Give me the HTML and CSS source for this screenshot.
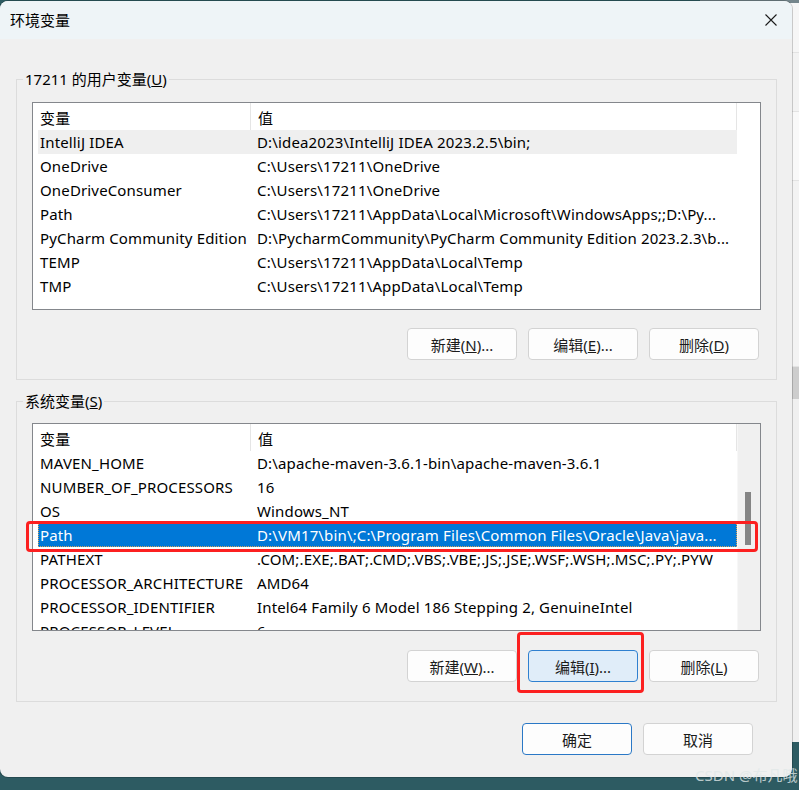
FILE: index.html
```html
<!DOCTYPE html>
<html lang="zh-CN">
<head>
    <meta charset="UTF-8">
    <meta name="viewport" content="width=device-width, initial-scale=1.0">
    <title>环境变量</title>
    <link rel="stylesheet" href="styles.css">
</head>
<body>
    <!-- window behind the dialog, only its left edge shows -->
    <div class="backwin">
        <div class="bw-top"></div>
        <div class="bw-band bw-a"><span>m</span></div>
        <div class="bw-band bw-b"></div>
        <div class="bw-band bw-c"><span class="bw-link">:/</span></div>
        <div class="bw-band bw-d"></div>
        <div class="bw-band bw-e"></div>
    </div>

    <div class="dialog">
        <div class="titlebar">
            <span class="title">环境变量</span>
            <svg class="close" width="12" height="12" viewBox="0 0 12 12">
                <path d="M0.5 0.5L11.5 11.5M11.5 0.5L0.5 11.5" stroke="#1b1b1b" stroke-width="1.1" fill="none"/>
            </svg>
        </div>

        <div class="content">
            <fieldset class="group group-user">
                <legend>17211 的用户变量(<u>U</u>)</legend>
                <div class="listview">
                    <div class="lv-main">
                        <div class="lv-head">
                            <div class="col name">变量</div>
                            <div class="col value">值</div>
                        </div>
                        <div class="lv-row hover">
                            <div class="col name">IntelliJ IDEA</div>
                            <div class="col value">D:\idea2023\IntelliJ IDEA 2023.2.5\bin;</div>
                        </div>
                        <div class="lv-row">
                            <div class="col name">OneDrive</div>
                            <div class="col value">C:\Users\17211\OneDrive</div>
                        </div>
                        <div class="lv-row">
                            <div class="col name">OneDriveConsumer</div>
                            <div class="col value">C:\Users\17211\OneDrive</div>
                        </div>
                        <div class="lv-row">
                            <div class="col name">Path</div>
                            <div class="col value">C:\Users\17211\AppData\Local\Microsoft\WindowsApps;;D:\Py...</div>
                        </div>
                        <div class="lv-row">
                            <div class="col name">PyCharm Community Edition</div>
                            <div class="col value">D:\PycharmCommunity\PyCharm Community Edition 2023.2.3\b...</div>
                        </div>
                        <div class="lv-row">
                            <div class="col name">TEMP</div>
                            <div class="col value">C:\Users\17211\AppData\Local\Temp</div>
                        </div>
                        <div class="lv-row">
                            <div class="col name">TMP</div>
                            <div class="col value">C:\Users\17211\AppData\Local\Temp</div>
                        </div>
                    </div>
                    <div class="lv-side"></div>
                </div>
                <div class="btnrow">
                    <button class="btn">新建(<u>N</u>)...</button>
                    <button class="btn">编辑(<u>E</u>)...</button>
                    <button class="btn">删除(<u>D</u>)</button>
                </div>
            </fieldset>

            <fieldset class="group group-sys">
                <legend>系统变量(<u>S</u>)</legend>
                <div class="listview">
                    <div class="lv-main">
                        <div class="lv-head">
                            <div class="col name">变量</div>
                            <div class="col value">值</div>
                        </div>
                        <div class="lv-row">
                            <div class="col name">MAVEN_HOME</div>
                            <div class="col value">D:\apache-maven-3.6.1-bin\apache-maven-3.6.1</div>
                        </div>
                        <div class="lv-row">
                            <div class="col name">NUMBER_OF_PROCESSORS</div>
                            <div class="col value">16</div>
                        </div>
                        <div class="lv-row">
                            <div class="col name">OS</div>
                            <div class="col value">Windows_NT</div>
                        </div>
                        <div class="lv-row selected">
                            <div class="col name">Path</div>
                            <div class="col value">D:\VM17\bin\;C:\Program Files\Common Files\Oracle\Java\java...</div>
                        </div>
                        <div class="lv-row">
                            <div class="col name">PATHEXT</div>
                            <div class="col value">.COM;.EXE;.BAT;.CMD;.VBS;.VBE;.JS;.JSE;.WSF;.WSH;.MSC;.PY;.PYW</div>
                        </div>
                        <div class="lv-row">
                            <div class="col name">PROCESSOR_ARCHITECTURE</div>
                            <div class="col value">AMD64</div>
                        </div>
                        <div class="lv-row">
                            <div class="col name">PROCESSOR_IDENTIFIER</div>
                            <div class="col value">Intel64 Family 6 Model 186 Stepping 2, GenuineIntel</div>
                        </div>
                        <div class="lv-row">
                            <div class="col name">PROCESSOR_LEVEL</div>
                            <div class="col value">6</div>
                        </div>
                    </div>
                    <div class="lv-side scrollbar">
                        <div class="thumb"></div>
                    </div>
                    <div class="mark mark-row"></div>
                </div>
                <div class="btnrow">
                    <button class="btn">新建(<u>W</u>)...</button>
                    <button class="btn focused">编辑(<u>I</u>)...<span class="mark mark-btn"></span></button>
                    <button class="btn">删除(<u>L</u>)</button>
                </div>
            </fieldset>

            <div class="footer">
                <button class="btn default">确定</button>
                <button class="btn">取消</button>
            </div>
        </div>
    </div>

    <div class="watermark">CSDN @布凡哦</div>
</body>
</html>
```

FILE: styles.css
```css
body {
    margin: 0;
    width: 799px;
    height: 790px;
    position: relative;
    overflow: hidden;
    background-color: #2d5b62;
    font-family: "Noto Sans", "Noto Sans CJK SC", sans-serif;
    font-size: 15px;
    color: #000;
}

/* back window */
.backwin {
    position: absolute;
    left: 700px;
    top: 0;
    width: 99px;
    height: 742px;
    background-color: #f0f0f0;
    overflow: hidden;
}
.bw-top {
    height: 3px;
    background-color: #75868c;
}
.bw-band {
    border-bottom: 1px solid #e3e3e3;
    position: relative;
}
.bw-band span {
    position: absolute;
    left: 92px;
    line-height: 20px;
}
.bw-a {
    height: 49px;
    background-color: #f6f6f6;
}
.bw-a span {
    top: 70px;
}
.bw-b {
    height: 58px;
    background-color: #f3f3f3;
}
.bw-c {
    height: 68px;
    background-color: #f9f9f9;
}
.bw-c span {
    top: 75px;
}
.bw-link {
    color: #6d8199;
}
.bw-d {
    height: 185px;
    background-color: #f3f3f3;
}
.bw-e {
    height: 32px;
    background-color: #cdcdcd;
    border: none;
}

/* dialog */
.dialog {
    position: absolute;
    left: 0;
    top: 1px;
    width: 792px;
    height: 776px;
    background-color: #f0f0f0;
    border-radius: 8px;
    overflow: hidden;
    box-shadow: 0 0 0 1px rgba(0, 0, 0, 0.18);
}
.titlebar {
    height: 38px;
    display: flex;
    align-items: center;
    padding: 0 15px 0 10px;
    background-color: #eef4f7;
}
.title {
    line-height: 20px;
}
.close {
    margin-left: auto;
}
.content {
    padding: 30px 15px 0 16px;
}

/* group boxes */
.group {
    margin: 0;
    padding: 13px 15px 19px 15px;
    border: 1px solid #dcdcdc;
}
.group legend {
    margin-left: -9px;
    padding: 0 2px;
    line-height: 20px;
}
.group-sys {
    margin-top: 11px;
    padding-top: 12px;
}

/* list views */
.listview {
    position: relative;
    display: flex;
    height: 206px;
    border: 1px solid #84878c;
    background-color: #fff;
    letter-spacing: 0.15px;
}
.lv-main {
    width: 704px;
    overflow: hidden;
}
.lv-side {
    flex: 1;
}
.lv-head {
    display: flex;
    height: 27px;
    margin-left: 5px;
}
.lv-head .col {
    padding-top: 3px;
    line-height: 24px;
}
.lv-head .name,
.lv-head .value {
    border-right: 1px solid #e5e5e5;
}
.lv-row {
    display: flex;
    height: 24px;
    margin-left: 5px;
    line-height: 25px;
}
.col {
    white-space: nowrap;
    overflow: hidden;
}
.name {
    width: 210px;
    padding-left: 2px;
}
.value {
    flex: 1;
    padding-left: 7px;
}
.lv-row.hover {
    background-color: #efefef;
}
.lv-row.selected {
    background-color: #0078d7;
    color: #fff;
    outline: 1px dotted #d9a25a;
    outline-offset: -1px;
}
.scrollbar {
    position: relative;
    background-color: #f0f0f0;
    border-left: 1px solid #f7f7f7;
}
.thumb {
    position: absolute;
    left: 7px;
    top: 68px;
    width: 6px;
    height: 53px;
    background-color: #858585;
}

/* buttons */
.btnrow {
    display: flex;
    justify-content: flex-end;
    gap: 11px;
    margin-top: 18px;
    padding-right: 2px;
}
.group-sys .btnrow {
    margin-top: 19px;
}
.btn {
    position: relative;
    width: 110px;
    height: 32px;
    padding: 0;
    font-family: inherit;
    font-size: 15px;
    color: #1b1b1b;
    background-color: #fdfdfd;
    border: 1px solid #d3d3d3;
    border-radius: 4px;
}
.btn.focused {
    background-color: #e0edf9;
    border-color: #2f80d0;
}
.btn.default {
    border-color: #2a78c6;
}
.footer {
    display: flex;
    justify-content: flex-end;
    gap: 11px;
    margin-top: 21px;
    padding-right: 24px;
}

/* red annotation boxes */
.mark {
    position: absolute;
    border: 3px solid #fc2020;
    border-radius: 4px;
    box-sizing: border-box;
}
.mark-row {
    left: -7px;
    top: 97px;
    width: 732px;
    height: 31px;
}
.mark-btn {
    left: -12px;
    top: -19px;
    width: 127px;
    height: 61px;
}

.watermark {
    position: absolute;
    left: 695px;
    top: 765px;
    font-size: 15px;
    line-height: 20px;
    color: rgba(225, 232, 232, 0.8);
}
```
